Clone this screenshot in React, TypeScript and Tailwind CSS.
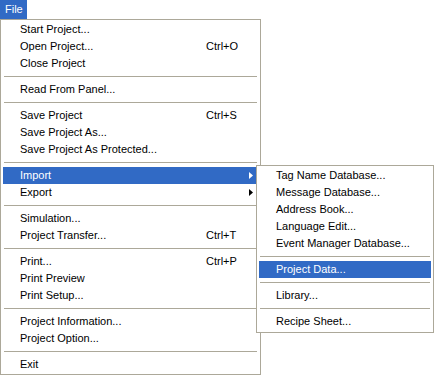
import React from "react";

type Item =
  | { type: "sep" }
  | { type: "item"; label: string; shortcut?: string; sub?: boolean; active?: boolean };

const mainItems: Item[] = [
  { type: "item", label: "Start Project..." },
  { type: "item", label: "Open Project...", shortcut: "Ctrl+O" },
  { type: "item", label: "Close Project" },
  { type: "sep" },
  { type: "item", label: "Read From Panel..." },
  { type: "sep" },
  { type: "item", label: "Save Project", shortcut: "Ctrl+S" },
  { type: "item", label: "Save Project As..." },
  { type: "item", label: "Save Project As Protected..." },
  { type: "sep" },
  { type: "item", label: "Import", sub: true, active: true },
  { type: "item", label: "Export", sub: true },
  { type: "sep" },
  { type: "item", label: "Simulation..." },
  { type: "item", label: "Project Transfer...", shortcut: "Ctrl+T" },
  { type: "sep" },
  { type: "item", label: "Print...", shortcut: "Ctrl+P" },
  { type: "item", label: "Print Preview" },
  { type: "item", label: "Print Setup..." },
  { type: "sep" },
  { type: "item", label: "Project Information..." },
  { type: "item", label: "Project Option..." },
  { type: "sep" },
  { type: "item", label: "Exit" },
];

const subItems: Item[] = [
  { type: "item", label: "Tag Name Database..." },
  { type: "item", label: "Message Database..." },
  { type: "item", label: "Address Book..." },
  { type: "item", label: "Language Edit..." },
  { type: "item", label: "Event Manager Database..." },
  { type: "sep" },
  { type: "item", label: "Project Data...", active: true },
  { type: "sep" },
  { type: "item", label: "Library..." },
  { type: "sep" },
  { type: "item", label: "Recipe Sheet..." },
];

function Arrow({ white }: { white?: boolean }) {
  return (
    <svg width="4" height="7" viewBox="0 0 4 7" className="block">
      <path d="M0 0 L4 3.5 L0 7 Z" fill={white ? "#ffffff" : "#000000"} />
    </svg>
  );
}

function MenuList({ items, labelWidth }: { items: Item[]; labelWidth: number }) {
  return (
    <>
      {items.map((it, i) =>
        it.type === "sep" ? (
          <div key={i} className="h-[9px] pt-[4px] px-px">
            <div className="h-px bg-[#aca899]" />
          </div>
        ) : (
          <div
            key={i}
            className={
              "flex items-center h-[17px] pl-[17px] pr-[5px] whitespace-nowrap " +
              (it.active ? "bg-[#316ac5] text-white" : "text-black")
            }
          >
            <span style={{ width: labelWidth }} className="shrink-0">
              {it.label}
            </span>
            <span className="flex-1">{it.shortcut ?? ""}</span>
            {it.sub ? <Arrow white={it.active} /> : null}
          </div>
        )
      )}
    </>
  );
}

export default function App() {
  return (
    <div
      className="relative w-[434px] h-[376px] bg-white text-[11px] leading-[17px] overflow-hidden"
      style={{ fontFamily: "Tahoma, 'Liberation Sans', Arial, sans-serif" }}
    >
      <div className="flex h-[19px]">
        <div className="w-[27px] h-[19px] bg-[#316ac5] text-white pl-[5px] leading-[19px]">File</div>
      </div>
      <div className="w-[261px] h-[356px] border border-[#aca899] bg-white p-[1px] px-[2px]">
        <MenuList items={mainItems} labelWidth={186} />
      </div>
      <div className="absolute left-[256px] top-[165px] w-[178px] h-[168px] border border-[#aca899] bg-white py-[1px] px-[2px]">
        <MenuList items={subItems} labelWidth={150} />
      </div>
    </div>
  );
}
